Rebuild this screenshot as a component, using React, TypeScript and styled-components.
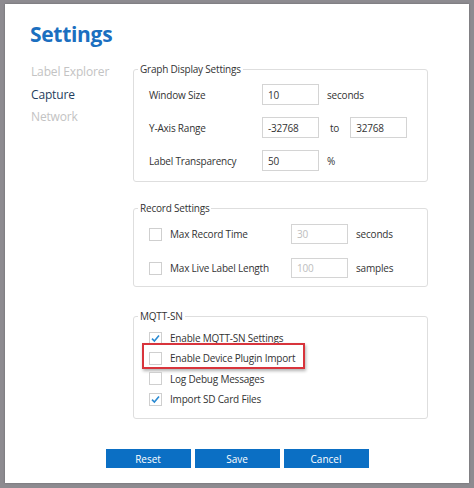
import React from 'react';
import styled, { createGlobalStyle } from 'styled-components';

const GlobalStyle = createGlobalStyle`
  html, body {
    margin: 0;
    padding: 0;
    background: #8d8b90;
  }
  body {
    font-family: "Open Sans", "Noto Sans", sans-serif;
    color: #333;
  }
`;

function CheckBox({ checked }: { checked?: boolean }) {
  return (
    <Box>
      {checked && (
        <svg width="11" height="11" viewBox="0 0 11 11">
          <path d="M2 5.6 L4.4 8 L9 2.6" fill="none" stroke="#2a8ad2" strokeWidth="1.6" />
        </svg>
      )}
    </Box>
  );
}

function App() {
  return (
    <>
      <GlobalStyle />
      <Screen>
        <Dialog>
          <Title>Settings</Title>
          <Body>
            <Nav>
              <NavItem>Label Explorer</NavItem>
              <NavItem $active>Capture</NavItem>
              <NavItem>Network</NavItem>
            </Nav>
            <Content>
              <Group>
                <Legend>Graph Display Settings</Legend>
                <GraphRows>
                  <FieldRow>
                    <FieldLabel>Window Size</FieldLabel>
                    <Input>10</Input>
                    <Unit>seconds</Unit>
                  </FieldRow>
                  <FieldRow>
                    <FieldLabel>Y-Axis Range</FieldLabel>
                    <Input>-32768</Input>
                    <Unit $wide>to</Unit>
                    <Input>32768</Input>
                  </FieldRow>
                  <FieldRow>
                    <FieldLabel>Label Transparency</FieldLabel>
                    <Input>50</Input>
                    <Unit>%</Unit>
                  </FieldRow>
                </GraphRows>
              </Group>

              <Group $gap={19}>
                <Legend>Record Settings</Legend>
                <RecordRows>
                  <FieldRow>
                    <CheckBox />
                    <CheckLabel>Max Record Time</CheckLabel>
                    <Input $disabled $short>30</Input>
                    <Unit>seconds</Unit>
                  </FieldRow>
                  <FieldRow>
                    <CheckBox />
                    <CheckLabel>Max Live Label Length</CheckLabel>
                    <Input $disabled $short>100</Input>
                    <Unit>samples</Unit>
                  </FieldRow>
                </RecordRows>
              </Group>

              <Group $gap={22}>
                <Legend>MQTT-SN</Legend>
                <OptionRows>
                  <Option>
                    <CheckBox checked />
                    <span>Enable MQTT-SN Settings</span>
                  </Option>
                  <Option>
                    <CheckBox />
                    <span>Enable Device Plugin Import</span>
                    <Highlight />
                  </Option>
                  <Option>
                    <CheckBox />
                    <span>Log Debug Messages</span>
                  </Option>
                  <Option>
                    <CheckBox checked />
                    <span>Import SD Card Files</span>
                  </Option>
                </OptionRows>
              </Group>
            </Content>
          </Body>
          <Footer>
            <Button>Reset</Button>
            <Button>Save</Button>
            <Button>Cancel</Button>
          </Footer>
        </Dialog>
      </Screen>
    </>
  );
}

const Screen = styled.div`
  padding: 4px 0 0 5px;
  height: 484px;
  overflow: hidden;
`;

const Dialog = styled.div`
  width: 464px;
  height: 479px;
  background: #fff;
  box-sizing: border-box;
  padding-top: 16px;
  display: flex;
  flex-direction: column;
  box-shadow: 0 0 2px rgba(0, 0, 0, 0.25);
`;

const Title = styled.h1`
  margin: 0 0 0 25px;
  font-size: 21px;
  line-height: 28px;
  font-weight: 700;
  letter-spacing: -0.3px;
  color: #1b6fc0;
`;

const Body = styled.div`
  display: flex;
  margin-top: 14px;
`;

const Nav = styled.div`
  width: 102px;
  padding-left: 26px;
  display: flex;
  flex-direction: column;
  margin-top: -1px;
`;

const NavItem = styled.div<{ $active?: boolean }>`
  font-size: 12px;
  line-height: 22.5px;
  letter-spacing: -0.15px;
  color: ${(p) => (p.$active ? '#1f3e5e' : '#c3c3c3')};
`;

const Content = styled.div`
  width: 295px;
  display: flex;
  flex-direction: column;
  letter-spacing: -0.2px;
`;

const Group = styled.fieldset<{ $gap?: number }>`
  margin: ${(p) => p.$gap ?? 0}px 0 0;
  padding: 0;
  border: 1px solid #dedede;
  border-radius: 3px;
  min-width: 0;
`;

const Legend = styled.legend`
  margin-left: 4px;
  padding: 0 2px;
  font-size: 10px;
  line-height: 14px;
  color: #333;
`;

const GraphRows = styled.div`
  display: flex;
  flex-direction: column;
  gap: 12px;
  padding: 8px 0 10px 15px;
`;

const RecordRows = styled.div`
  display: flex;
  flex-direction: column;
  gap: 14px;
  padding: 9px 0 8px 15px;
`;

const OptionRows = styled.div`
  display: flex;
  flex-direction: column;
  padding: 5px 0 9px 15px;
`;

const FieldRow = styled.div`
  display: flex;
  align-items: center;
  font-size: 10px;
`;

const FieldLabel = styled.span`
  width: 113px;
`;

const CheckLabel = styled.span`
  width: 121px;
  margin-left: 8px;
`;

const Input = styled.div<{ $disabled?: boolean; $short?: boolean }>`
  width: 57px;
  height: ${(p) => (p.$short ? 20 : 21)}px;
  box-sizing: border-box;
  border: 1px solid #d4d4d4;
  padding-left: 5px;
  display: flex;
  align-items: center;
  font-size: 10px;
  color: ${(p) => (p.$disabled ? '#bdbdbd' : '#333')};
`;

const Unit = styled.span<{ $wide?: boolean }>`
  margin: 0 ${(p) => (p.$wide ? 11 : 0)}px 0 ${(p) => (p.$wide ? 11 : 8)}px;
`;

const Box = styled.span`
  width: 13px;
  height: 13px;
  box-sizing: border-box;
  border: 1px solid #cfcfcf;
  background: #fff;
  display: inline-flex;
  align-items: center;
  justify-content: center;
  flex-shrink: 0;
`;

const Option = styled.div`
  position: relative;
  display: flex;
  align-items: center;
  gap: 8px;
  height: 20.3px;
  font-size: 10px;
`;

const Highlight = styled.span`
  position: absolute;
  left: -7px;
  top: -5px;
  width: 163px;
  height: 26px;
  box-sizing: border-box;
  border: 2px solid #d8343c;
  box-shadow: 1px 2px 3px rgba(0, 0, 0, 0.3);
`;

const Footer = styled.div`
  margin-top: auto;
  padding-bottom: 15px;
  display: flex;
  justify-content: center;
  gap: 4px;
`;

const Button = styled.button`
  width: 85px;
  height: 19px;
  border: none;
  padding: 0;
  background: #0b6fc4;
  color: #fff;
  font-family: "Open Sans", sans-serif;
  font-size: 10px;
`;

export default App;
